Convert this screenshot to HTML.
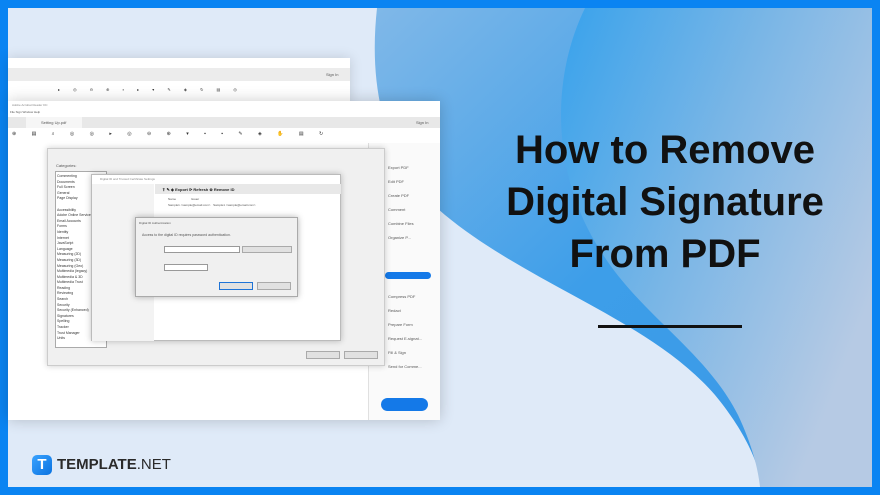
<!DOCTYPE html>
<html><head><meta charset="utf-8"><style>
*{margin:0;padding:0;box-sizing:border-box}
body{width:880px;height:495px;overflow:hidden;background:#0a84f2;font-family:"Liberation Sans",sans-serif;position:relative}
.abs{position:absolute}
.t{font-size:4px;color:#555;white-space:nowrap}
</style></head><body>
<div class="abs" style="left:8px;top:8px;width:864px;height:479px;background:#dfeaf8;overflow:hidden">
<svg class="abs" style="left:-8px;top:-8px" width="880" height="495" viewBox="0 0 880 495">
<defs>
<linearGradient id="g1" x1="0" y1="0" x2="1" y2="1"><stop offset="0" stop-color="#80b8e8"/><stop offset="0.5" stop-color="#3d9ee9"/><stop offset="1" stop-color="#3a98e6"/></linearGradient>
<linearGradient id="g2" x1="0" y1="0" x2="1" y2="0.6"><stop offset="0" stop-color="#38a2ec"/><stop offset="0.5" stop-color="#7ab6e6"/><stop offset="1" stop-color="#b6cae4"/></linearGradient>
</defs>
<path d="M377,8 C368,90 385,165 445,215 C530,285 650,320 715,395 C748,435 760,468 762,487 L872,487 L872,8 Z" fill="url(#g1)"/>
<path d="M585,8 C550,80 552,175 600,250 C640,315 705,350 738,415 C752,445 758,468 760,487 L872,487 L872,8 Z" fill="url(#g2)"/>
</svg>
</div>
<!-- back window -->
<div class="abs" style="left:8px;top:58px;width:342px;height:46px;background:#fff;box-shadow:0 0 12px rgba(0,0,0,.15)">
<div class="abs" style="left:0;top:10px;width:342px;height:13px;background:#ececec"></div>
<div class="abs t" style="left:318px;top:14px">Sign In</div>
<div class="abs t" style="left:50px;top:29px;letter-spacing:6px;color:#333">▸ ◎ ⊖ ⊕ ▪ ▸ ▾ ✎ ◈ ↻ ▤ ◎</div>
</div>
<!-- front window -->
<div class="abs" style="left:8px;top:101px;width:432px;height:319px;background:#fff;box-shadow:0 0 14px rgba(0,0,0,.2)">
<div class="abs t" style="left:4px;top:2px;font-size:3px;color:#888">Adobe Acrobat Reader DC</div>
<div class="abs t" style="left:2px;top:9px;font-size:3px">File Sign Window Help</div>
<div class="abs" style="left:0;top:16px;width:432px;height:11px;background:#e8e8e8"></div>
<div class="abs" style="left:18px;top:16px;width:56px;height:11px;background:#f6f6f6"></div>
<div class="abs t" style="left:33px;top:19px">Setting Up.pdf</div>
<div class="abs t" style="left:408px;top:19px">Sign In</div>
<div class="abs t" style="left:4px;top:30px;letter-spacing:7px;color:#333;font-size:5px">⊕ ▤ ⌕ ◎ ◎ ▸ ◎ ⊖ ⊕ ▾ ▪ ▪ ✎ ◈ ✋ ▤ ↻</div>
<div class="abs" style="left:360px;top:42px;width:72px;height:277px;background:#fafafa;border-left:1px solid #e0e0e0"></div>
<div class="abs t" style="left:380px;top:64px">Export PDF</div>
<div class="abs t" style="left:380px;top:78px">Edit PDF</div>
<div class="abs t" style="left:380px;top:92px">Create PDF</div>
<div class="abs t" style="left:380px;top:106px">Comment</div>
<div class="abs t" style="left:380px;top:120px">Combine Files</div>
<div class="abs t" style="left:380px;top:134px">Organize P...</div>
<div class="abs" style="left:377px;top:171px;width:46px;height:7px;border-radius:4px;background:#1479e8"></div>
<div class="abs t" style="left:380px;top:193px">Compress PDF</div>
<div class="abs t" style="left:380px;top:207px">Redact</div>
<div class="abs t" style="left:380px;top:221px">Prepare Form</div>
<div class="abs t" style="left:380px;top:235px">Request E-signat...</div>
<div class="abs t" style="left:380px;top:249px">Fill & Sign</div>
<div class="abs t" style="left:380px;top:263px">Send for Comme...</div>
<div class="abs" style="left:373px;top:297px;width:47px;height:13px;border-radius:7px;background:#1479e8"></div>
</div>
<!-- preferences dialog -->
<div class="abs" style="left:47px;top:148px;width:338px;height:218px;background:#f0f0f0;border:1px solid #ccc;box-shadow:0 0 6px rgba(0,0,0,.2)">
<div class="abs t" style="left:8px;top:14px">Categories:</div>
<div class="abs" style="left:7px;top:22px;width:52px;height:177px;background:#fff;border:1px solid #aaa"></div>
<div class="abs t" style="left:9px;top:25px;line-height:5.6px;font-size:3.5px;color:#333">Commenting<br>Documents<br>Full Screen<br>General<br>Page Display<br><br>Accessibility<br>Adobe Online Services<br>Email Accounts<br>Forms<br>Identity<br>Internet<br>JavaScript<br>Language<br>Measuring (2D)<br>Measuring (3D)<br>Measuring (Geo)<br>Multimedia (legacy)<br>Multimedia & 3D<br>Multimedia Trust<br>Reading<br>Reviewing<br>Search<br>Security<br>Security (Enhanced)<br>Signatures<br>Spelling<br>Tracker<br>Trust Manager<br>Units</div>
<div class="abs" style="left:258px;top:202px;width:34px;height:8px;background:#e1e1e1;border:1px solid #aaa"></div>
<div class="abs" style="left:296px;top:202px;width:34px;height:8px;background:#e1e1e1;border:1px solid #aaa"></div>
</div>
<!-- digital IDs dialog -->
<div class="abs" style="left:91px;top:174px;width:250px;height:167px;background:#fff;border:1px solid #bbb;box-shadow:0 0 6px rgba(0,0,0,.25)">
<div class="abs t" style="left:8px;top:2px;font-size:3px;color:#888">Digital ID and Trusted Certificate Settings</div>
<div class="abs" style="left:0;top:9px;width:62px;height:157px;background:#f3f3f3"></div>
<div class="abs" style="left:63px;top:9px;width:186px;height:10px;background:#e8e8e8"></div>
<div class="abs t" style="left:70px;top:12px;color:#222;font-weight:bold">⇪ ✎ ◈ Export ⟳ Refresh ⊗ Remove ID</div>
<div class="abs t" style="left:76px;top:22px;font-size:3px">Name &nbsp;&nbsp;&nbsp;&nbsp;&nbsp;&nbsp;&nbsp;&nbsp;&nbsp;&nbsp;&nbsp;&nbsp;&nbsp;&nbsp;&nbsp;&nbsp; Issuer</div>
<div class="abs t" style="left:76px;top:28px;font-size:3px">Sample1 &lt;sample@email.com&gt; &nbsp; Sample1 &lt;sample@email.com&gt;</div>
</div>
<!-- small dialog -->
<div class="abs" style="left:135px;top:217px;width:163px;height:80px;background:#f0f0f0;border:1px solid #aaa;box-shadow:0 0 6px rgba(0,0,0,.3)">
<div class="abs t" style="left:3px;top:3px;font-size:3px">Digital ID Authentication</div>
<div class="abs t" style="left:6px;top:15px;font-size:3.5px">Access to the digital ID requires password authentication.</div>
<div class="abs" style="left:28px;top:28px;width:76px;height:7px;background:#fff;border:1px solid #999"></div>
<div class="abs" style="left:106px;top:28px;width:50px;height:7px;background:#e1e1e1;border:1px solid #aaa"></div>
<div class="abs" style="left:28px;top:46px;width:44px;height:7px;background:#fff;border:1px solid #999"></div>
<div class="abs" style="left:83px;top:64px;width:34px;height:8px;background:#e1e1e1;border:1px solid #1e73d6"></div>
<div class="abs" style="left:121px;top:64px;width:34px;height:8px;background:#e1e1e1;border:1px solid #aaa"></div>
</div>
<!-- title -->
<div class="abs" style="left:460px;top:124px;width:410px;text-align:center;font-size:40px;font-weight:bold;line-height:52px;color:#111;font-family:'Liberation Sans',sans-serif">How to Remove<br>Digital Signature<br>From PDF</div>
<div class="abs" style="left:598px;top:325px;width:144px;height:3px;background:#111"></div>
<!-- logo -->
<div class="abs" style="left:32px;top:455px;width:20px;height:20px;border-radius:5px;background:linear-gradient(135deg,#3aa3ff,#0a72e0);color:#fff;font-weight:bold;font-size:15px;line-height:20px;text-align:center">T</div>
<div class="abs" style="left:57px;top:456px;font-size:15px;line-height:18px;color:#2a2a2a"><b>TEMPLATE</b>.NET</div>
</body></html>
